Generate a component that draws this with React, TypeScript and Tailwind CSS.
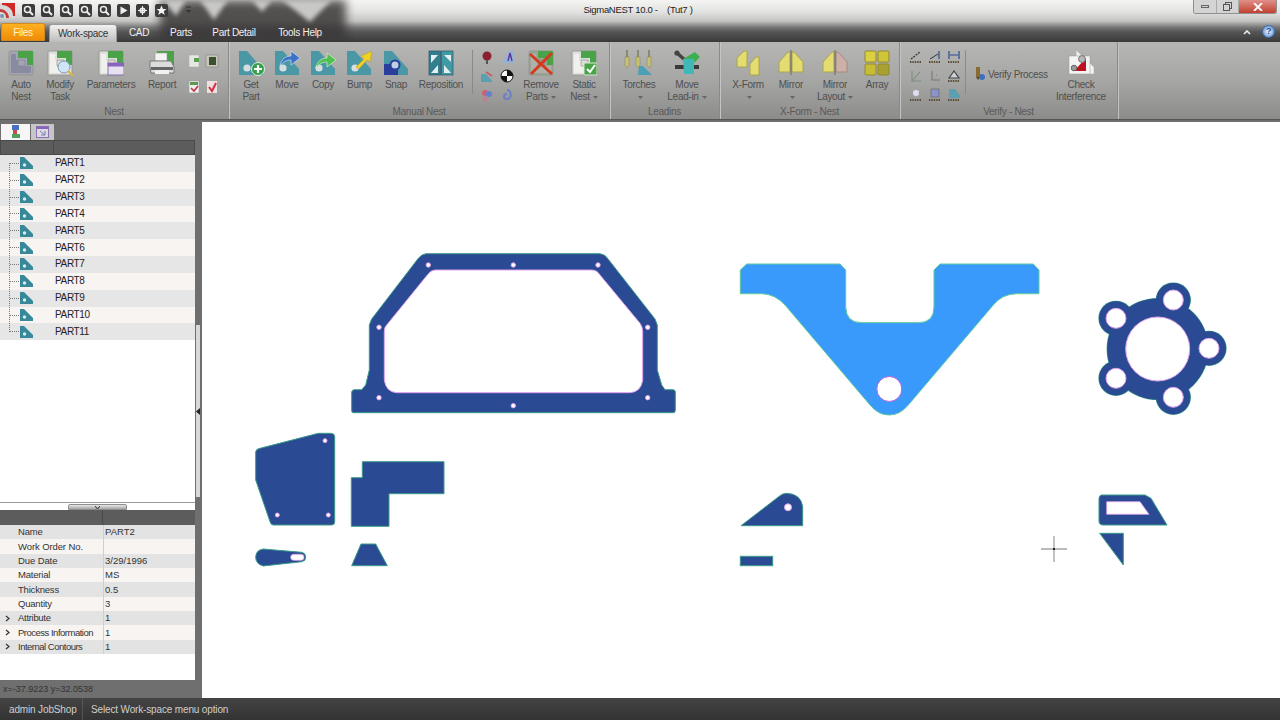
import React from "react";

const FONT = "[font-family:'Liberation_Sans',Arial,sans-serif]";

function Caret() {
  return <svg width="5" height="3" viewBox="0 0 5 3" className="inline-block ml-[3px] align-middle"><path d="M0 0H5L2.5 3Z" fill="#666" /></svg>;
}

function Nest({ kind = "auto" }: { kind?: string }) {
  const base = kind === "auto" ? "#a3a3b4" : kind === "remove" ? "#9aa594" : "#dededa";
  return (
    <svg width="26" height="26" viewBox="0 0 26 26">
      <rect x="1" y="1" width="24" height="24" rx="1.5" fill={base} stroke="#8f8f8a" strokeWidth=".8" />
      <path d="M10 1H25V15H19V8H10Z" fill="#4aa348" />
      <path d="M3 4H8V10H14V16H23V23H3Z" fill={kind === "auto" ? "#8a8aa0" : kind === "remove" ? "#b0b0a8" : "#f0f0ec"} />
      <path d="M10 10H17V16H10Z" fill={base} stroke="#85858a" strokeWidth=".6" />
      {kind === "modify" && <><circle cx="17" cy="17" r="6" fill="#cfe4f4" stroke="#7c9ab8" /><path d="M21 21L26 26" stroke="#d8b84a" strokeWidth="2.4" /></>}
      {kind === "params" && <><rect x="10" y="13" width="16" height="12" fill="#e6e0f0" stroke="#8a72b4" /><rect x="10" y="13" width="16" height="3.5" fill="#8a62c0" /></>}
      {kind === "remove" && <path d="M2 4L24 24M24 3L3 24" stroke="#d33a20" strokeWidth="3" />}
      {kind === "static" && <><rect x="13" y="13" width="13" height="12" rx="1" fill="#4aa348" stroke="#d8e8d0" /><path d="M16 19L19 22L24 15" stroke="#fff" strokeWidth="2" fill="none" /></>}
    </svg>
  );
}

function Printer() {
  return (
    <svg width="26" height="26" viewBox="0 0 26 26">
      <rect x="8" y="1" width="17" height="14" fill="#4aa348" />
      <path d="M6 3H18V11H6Z" fill="#f4f4f4" stroke="#999" strokeWidth=".6" />
      <path d="M1 11H22L25 17V23H2L1 17Z" fill="#dcdcdc" stroke="#666" strokeWidth=".8" />
      <rect x="2" y="17" width="22" height="3" fill="#666" />
      <rect x="6" y="20" width="14" height="4" fill="#f2f2f2" />
    </svg>
  );
}

function PartShape({ fill = "#4a97a6" }: { fill?: string }) {
  return (
    <>
      <path d="M1 1H9L25 19V25H1Z" fill={fill} />
      <circle cx="9" cy="18" r="3.6" fill="#d8dedf" />
    </>
  );
}

function Part({ kind }: { kind: string }) {
  return (
    <svg width="27" height="26" viewBox="0 0 27 26">
      <PartShape />
      {kind === "get" && <><circle cx="20" cy="19" r="6.5" fill="#35a04a" stroke="#e4f0e4" /><path d="M20 15V23M16 19H24" stroke="#fff" strokeWidth="2.2" /></>}
      {kind === "move" && <path d="M6 16C7 9 12 6 17 6V1L26 8L17 15V10C12 10 9 12 6 16Z" fill="#3a72c8" stroke="#cfe0f4" strokeWidth=".7" />}
      {kind === "copy" && <path d="M6 18C7 11 12 8 17 8V3L26 10L17 17V12C12 12 9 14 6 18Z" fill="#4fc04f" stroke="#d8f0d0" strokeWidth=".7" />}
      {kind === "bump" && <path d="M10 17L18 9L15 6L26 1L24 12L21 10L13 19Z" fill="#f0d020" stroke="#b09a20" strokeWidth=".5" />}
      {kind === "snap" && <><path d="M1 14H15V25H1Z" fill="#2a3f9c" /><circle cx="12" cy="15" r="4.5" fill="#c0d0e0" stroke="#2a3f9c" strokeWidth="2" /></>}
    </svg>
  );
}

function Reposition() {
  return (
    <svg width="26" height="26" viewBox="0 0 26 26">
      <rect x="1" y="1" width="11.5" height="24" fill="#2f7f8f" stroke="#34506a" strokeWidth=".7" />
      <rect x="13.5" y="1" width="11.5" height="24" fill="#3f9aa4" stroke="#34506a" strokeWidth=".7" />
      <path d="M3 5H10L3 13ZM10 15V23H3Z" fill="#e6eef0" />
      <path d="M16 5H23V12ZM16 15L23 23H16Z" fill="#e6eef0" />
    </svg>
  );
}

function Yellow({ kind }: { kind: string }) {
  const y = "#e4dc70";
  const s = "#a8a450";
  return (
    <svg width="26" height="26" viewBox="0 0 26 26">
      {kind === "xform" && <><path d="M2 17V8L9 1H12V17Z" fill={y} stroke={s} /><path d="M15 25V14L21 7H24V25Z" fill={y} stroke={s} /></>}
      {kind === "mirror" && <><path d="M1 22V12L10 2H12V22Z" fill={y} stroke={s} /><path d="M25 22V12L16 2H14V22Z" fill={y} stroke={s} /><path d="M13 0V25" stroke="#666" /></>}
      {kind === "layout" && <><path d="M1 22V12L10 2H12V22Z" fill={y} stroke={s} /><path d="M25 22V12L16 2H14V22Z" fill="#cdb0a8" stroke="#a08a80" /><path d="M13 0V25" stroke="#666" /></>}
      {kind === "array" && <>
        <rect x="1" y="1" width="11" height="11" rx="1" fill="#dcd040" stroke="#8f8a30" />
        <rect x="14" y="1" width="11" height="11" rx="1" fill="#d0c438" stroke="#8f8a30" />
        <rect x="1" y="14" width="11" height="11" rx="1" fill="#c8bc34" stroke="#8f8a30" />
        <rect x="14" y="14" width="11" height="11" rx="1" fill="#a8a030" stroke="#8f8a30" />
      </>}
    </svg>
  );
}

function Torches() {
  return (
    <svg width="30" height="26" viewBox="0 0 30 26">
      {[3, 14, 25].map((x) => <g key={x}>
        <rect x={x - 1} y={0} width="2" height="7" fill="#8a8a70" />
        <path d={`M${x - 2} 7H${x + 2}V15L${x} 18L${x - 2} 15Z`} fill="#c8c270" stroke="#85805a" strokeWidth=".5" />
      </g>)}
      <path d="M15 16H19L28 25H14Z" fill="#4aa0b4" />
    </svg>
  );
}

function LeadIn() {
  return (
    <svg width="28" height="26" viewBox="0 0 28 26">
      <path d="M2 15H26V19H2Z" fill="#3a3a3a" />
      <circle cx="4" cy="3" r="2.6" fill="#444" />
      <path d="M4 3L12 10" stroke="#444" strokeWidth="3.5" />
      <path d="M10 9L22 2L27 7L21 13Z" fill="#3cb050" />
      <path d="M10 9H21V24H11Z" fill="#40b8b8" />
    </svg>
  );
}

function CheckInt() {
  return (
    <svg width="26" height="26" viewBox="0 0 26 26">
      <path d="M8 0L26 17V24H9Z" fill="#f2f2f0" stroke="#aaa" strokeWidth=".5" />
      <rect x="1" y="6" width="21" height="18" fill="#f4f4f4" stroke="#999" strokeWidth=".5" />
      <path d="M6 21L18 8V21Z" fill="#c01020" />
      <circle cx="14" cy="9" r="3.4" fill="#b8b8b8" stroke="#777" />
      <circle cx="6" cy="18" r="2.8" fill="#999" stroke="#666" />
    </svg>
  );
}

function Big({ w, icon, l1, l2, caret1, caret2 }: { w: number; icon: React.ReactNode; l1: string; l2?: string; caret1?: boolean; caret2?: boolean }) {
  return (
    <div style={{ width: w }} className="flex flex-col items-center shrink-0">
      <div className="h-[26px] flex items-center justify-center">{icon}</div>
      <div className="mt-[3px] text-[10px] tracking-[-0.3px] leading-[12px] text-[#4f4f4f] text-center whitespace-nowrap">
        <div>{l1}</div>
        {(l2 || caret1) && <div>{l2}{(caret1 || caret2) && <Caret />}</div>}
      </div>
    </div>
  );
}

function Group({ w, label, children }: { w: number; label: string; children: React.ReactNode }) {
  return (
    <div style={{ width: w }} className="shrink-0 flex flex-col border-r border-r-[#8a8a8a] shadow-[1px_0_0_#c4c4c4] h-[77px]">
      <div className="flex h-[55px] pt-2 items-start">{children}</div>
      <div className="mt-[9px] text-[10px] tracking-[-0.3px] leading-[12px] text-[#5a5a5a] text-center whitespace-nowrap">{label}</div>
    </div>
  );
}

function Small({ c, kind = "sq" }: { c: string; kind?: string }) {
  return (
    <svg width="14" height="14" viewBox="0 0 14 14">
      {kind === "sq" && <><rect x="2" y="1" width="10" height="12" fill="#e4e8e0" stroke="#aaa" strokeWidth=".5" /><path d="M7 4H12V8H7Z" fill={c} /></>}
      {kind === "dark" && <><rect x="1" y="1" width="12" height="12" fill="#c8c8b8" stroke="#777" strokeWidth=".5" /><path d="M4 3H11V11H4Z" fill={c} /></>}
      {kind === "chk" && <><rect x="2" y="1" width="10" height="12" fill="#eee" stroke="#999" strokeWidth=".5" /><path d="M3 2H11V5H3Z" fill="#5a9a50" /><path d="M4 8L7 11L11 6" stroke="#c83040" strokeWidth="1.6" fill="none" /></>}
      {kind === "chk2" && <><rect x="2" y="1" width="10" height="12" fill="#efe0e0" /><path d="M4 7L7 11L11 3" stroke="#d03040" strokeWidth="2" fill="none" /></>}
      {kind === "burst" && <><circle cx="7" cy="6" r="4.5" fill="#8a2030" /><rect x="6" y="10" width="2" height="4" fill="#555" /></>}
      {kind === "a" && <><path d="M2 13L9 1H13V13Z" fill="#8fb4d8" /><path d="M8 11L10 3L12 11" stroke="#6030a0" strokeWidth="1.4" fill="none" /></>}
      {kind === "part" && <><path d="M1 5H6L13 13H1Z" fill="#5aa0b0" /><path d="M6 3L12 7" stroke="#c86060" strokeWidth="2" /></>}
      {kind === "target" && <><circle cx="7" cy="7" r="6" fill="#f4f4f4" stroke="#111" /><path d="M7 1A6 6 0 0 1 13 7H1A6 6 0 0 0 7 13Z" fill="#111" /></>}
      {kind === "mix" && <><circle cx="5" cy="5" r="3" fill="#d06070" /><circle cx="9" cy="6" r="3" fill="#6080d0" /><circle cx="5" cy="11" r="2.5" fill="#c08090" /></>}
      {kind === "swirl" && <><path d="M7 2C12 2 12 11 7 11C3 11 3 6 7 6" stroke="#6a80c8" strokeWidth="2" fill="none" /></>}
    </svg>
  );
}

function Verify({ kind }: { kind: number }) {
  const top = [
    <path key="0" d="M2 9L11 2" stroke="#333" strokeWidth="1.2" strokeDasharray="2 1" />,
    <g key="1"><path d="M2 9L10 4" stroke="#333" strokeWidth="1" /><path d="M11 1V9" stroke="#2a4a90" strokeWidth="1.2" /></g>,
    <path key="2" d="M2 1V9M12 1V9M3 5H11" stroke="#2a4a90" strokeWidth="1.2" />,
    <path key="3" d="M3 2V12H12M3 12L11 3" stroke="#7f8f7f" strokeWidth="1.1" fill="none" />,
    <path key="4" d="M4 2V11H12M8 6H9" stroke="#777" strokeWidth="1.1" fill="none" />,
    <path key="5" d="M2 9L7 2L12 9Z" stroke="#444" strokeWidth="1.2" fill="#c8d0d8" />,
    <circle key="6" cx="7" cy="5" r="3.4" fill="#dde" stroke="#888" strokeDasharray="1 1" />,
    <rect key="7" x="3" y="1" width="8" height="8" fill="#8a94c8" stroke="#555" strokeWidth=".5" />,
    <path key="8" d="M2 1H8L13 8V10H2Z" fill="#5aa0b0" />,
  ][kind];
  return (
    <svg width="14" height="14" viewBox="0 0 14 14">
      {top}
      {kind !== 3 && kind !== 4 && <path d="M1 12H13" stroke="#5a4a30" strokeWidth="2" strokeDasharray="1.4 1" />}
    </svg>
  );
}

function Qat({ kind }: { kind: string }) {
  return (
    <div className="w-[13px] h-[13px] rounded-[2px] bg-[#3c3c3c] flex items-center justify-center shrink-0">
      <svg width="11" height="11" viewBox="0 0 11 11">
        {kind === "z" && <><circle cx="4.5" cy="4.5" r="3" fill="none" stroke="#eee" strokeWidth="1.5" /><path d="M6.8 6.8L10 10" stroke="#eee" strokeWidth="2" /></>}
        {kind === "p" && <path d="M2.5 1.5L9.5 5.5L2.5 9.5Z" fill="#eee" />}
        {kind === "g" && <><circle cx="5.5" cy="5.5" r="3" fill="#eee" /><circle cx="5.5" cy="5.5" r="1.3" fill="#3c3c3c" /><path d="M5.5 1V10M1 5.5H10" stroke="#eee" strokeWidth="1" /></>}
        {kind === "s" && <path d="M5.5 0.5L7 4H10.5L7.7 6.3L8.8 10L5.5 7.8L2.2 10L3.3 6.3L.5 4H4Z" fill="#f4f4f4" />}
      </svg>
    </div>
  );
}

function TreeIcon() {
  return <svg width="13" height="12" viewBox="0 0 13 12"><path d="M0 0H4L13 9V12H0Z" fill="#37899a" /><circle cx="4.5" cy="8" r="1.7" fill="#dcebee" /></svg>;
}

const PARTS = ["PART1", "PART2", "PART3", "PART4", "PART5", "PART6", "PART7", "PART8", "PART9", "PART10", "PART11"];
const PROPS: [string, string, boolean, string][] = [
  ["Name", "PART2", false, "tracking-[-0.2px]"],
  ["Work Order No.", "", false, "tracking-[-0.1px]"],
  ["Due Date", "3/29/1996", false, "tracking-[-0.1px]"],
  ["Material", "MS", false, "tracking-[-0.2px]"],
  ["Thickness", "0.5", false, "tracking-[-0.2px]"],
  ["Quantity", "3", false, "tracking-[-0.2px]"],
  ["Attribute", "1", true, "tracking-[-0.3px]"],
  ["Process Information", "1", true, "tracking-[-0.5px]"],
  ["Internal Contours", "1", true, "tracking-[-0.5px]"],
];

function Header() {
  return (
    <div className="relative h-[42px] shrink-0 bg-[linear-gradient(#f4f4f2_0px,#e2e2e0_12px,#c4c4c2_21px,#7a7a7a_27px,#555_32px,#3a3a3a_42px)] overflow-hidden">
      <div className="absolute left-[160px] top-0 w-[186px] h-[42px] bg-[#3b3838] blur-[5px] opacity-85" />
      <svg className="absolute left-[160px] top-0 blur-[2px]" width="190" height="26" viewBox="0 0 190 26">
        <path d="M3 0H26L16 16ZM40 0H68L54 20ZM92 0H112L102 12ZM122 0H172L150 22Z" fill="#c8c8c6" />
      </svg>

      <div className="relative flex items-center h-[19px] pt-[1px]">
        <svg className="ml-0 mr-[7px] shrink-0" width="15" height="15" viewBox="0 0 15 15">
          <rect x="0" y="0" width="15" height="15" fill="#d8d8d8" />
          <path d="M2 0H15V13H13C13 6 8 2 2 2Z" fill="#d02828" />
          <path d="M0 6C5 6 9 10 9 15H6C6 11 4 9 0 9Z" fill="#c04040" />
          <circle cx="2" cy="13" r="2" fill="#7a93b0" />
        </svg>
        <div className="flex gap-[6px] items-center">
          {["z", "z", "z", "z", "z", "p", "g", "s"].map((k, i) => <Qat key={i} kind={k} />)}
        </div>
        <svg className="ml-[17px]" width="7" height="8" viewBox="0 0 7 8"><path d="M1 1H6" stroke="#333" /><path d="M1 4H6L3.5 7Z" fill="#333" /></svg>
      </div>

      <div className="absolute inset-x-0 top-[3px] pr-[4px] text-center text-[9.5px] tracking-[-0.3px] leading-[14px] text-[#222]">SigmaNEST 10.0 -&nbsp;&nbsp;&nbsp;&nbsp;(Tut7 )</div>

      <div className="absolute right-[3px] top-0 flex h-[14px] border border-t-0 border-[#8f8f8f] rounded-b-[3px] overflow-hidden">
        <div className="w-[23px] flex items-center justify-center bg-[#d4d4d4] border-r border-[#aaa]"><div className="w-[8px] h-[3px] border border-[#666]" /></div>
        <div className="w-[22px] flex items-center justify-center bg-[#d4d4d4] border-r border-[#aaa]">
          <svg width="9" height="9" viewBox="0 0 9 9"><rect x="2.5" y=".5" width="6" height="6" fill="none" stroke="#555" /><rect x=".5" y="2.5" width="6" height="6" fill="#d4d4d4" stroke="#555" /></svg>
        </div>
        <div className="w-[37px] flex items-center justify-center bg-[linear-gradient(#e09088,#c04030)]">
          <svg width="10" height="8" viewBox="0 0 10 8"><path d="M1 0L9 8M9 0L1 8" stroke="#f6f6f6" strokeWidth="2" /></svg>
        </div>
      </div>

      <div className="absolute left-0 bottom-0 right-0 flex items-end h-[20px] text-[10px] tracking-[-0.3px] text-[#f0f0f0]">
        <div className="ml-[1px] w-[44px] h-[18px] mb-[1px] rounded-t-[2px] bg-[linear-gradient(#ffb020,#ee8c08)] border border-[#d08a20] flex items-center justify-center text-[#fff3d0]">Files</div>
        <div className="ml-[4px] w-[68px] h-[18px] rounded-t-[3px] bg-[linear-gradient(#f2f2f2,#bcbcbc)] border border-b-0 border-[#9a9a9a] flex items-center justify-center text-[#333]">Work-space</div>
        <div className="w-[44px] text-center h-[18px] leading-[18px]">CAD</div>
        <div className="w-[40px] text-center h-[18px] leading-[18px]">Parts</div>
        <div className="w-[66px] text-center h-[18px] leading-[18px]">Part Detail</div>
        <div className="w-[66px] text-center h-[18px] leading-[18px]">Tools Help</div>
        <div className="flex-1" />
        <svg className="mb-[7px] mr-[11px]" width="8" height="5" viewBox="0 0 8 5"><path d="M1 4L4 1L7 4" stroke="#eee" strokeWidth="1.6" fill="none" /></svg>
        <div className="w-[13px] h-[13px] mb-[4px] mr-[5px] rounded-full bg-[radial-gradient(#fff,#3a78c8)] border border-[#3a70b8] flex items-center justify-center text-[9px] font-bold text-[#1e50a0] leading-none">?</div>
      </div>
    </div>
  );
}

function Ribbon() {
  return (
    <div className="h-[78px] shrink-0 flex bg-[linear-gradient(#b6b6b4,#a6a6a4_50%,#8c8c8a)] border-b border-b-[#555]">
      <Group w={229} label="Nest">
        <Big w={42} icon={<Nest kind="auto" />} l1="Auto" l2="Nest" />
        <Big w={36} icon={<Nest kind="modify" />} l1="Modify" l2="Task" />
        <Big w={66} icon={<Nest kind="params" />} l1="Parameters" />
        <Big w={36} icon={<Printer />} l1="Report" />
        <div className="ml-[7px] grid grid-cols-2 gap-x-[4px] gap-y-[12px] mt-[4px]">
          <Small c="#5aa050" /><Small c="#3a5030" kind="dark" />
          <Small c="#5aa050" kind="chk" /><Small c="#c83040" kind="chk2" />
        </div>
      </Group>
      <Group w={381} label="Manual Nest">
        <div className="w-[4px] shrink-0" />
        <Big w={36} icon={<Part kind="get" />} l1="Get" l2="Part" />
        <Big w={36} icon={<Part kind="move" />} l1="Move" />
        <Big w={36} icon={<Part kind="copy" />} l1="Copy" />
        <Big w={37} icon={<Part kind="bump" />} l1="Bump" />
        <Big w={36} icon={<Part kind="snap" />} l1="Snap" />
        <Big w={54} icon={<Reposition />} l1="Reposition" />
        <div className="w-px h-[44px] mx-[4px] bg-[#8a8a8a]" />
        <div className="grid grid-cols-2 gap-x-[5px] gap-y-[5px] w-[37px] pl-[3px]">
          <Small c="" kind="burst" /><Small c="" kind="a" />
          <Small c="" kind="part" /><Small c="" kind="target" />
          <Small c="" kind="mix" /><Small c="" kind="swirl" />
        </div>
        <Big w={54} icon={<Nest kind="remove" />} l1="Remove" l2="Parts" caret2 />
        <Big w={32} icon={<Nest kind="static" />} l1="Static" l2="Nest" caret2 />
      </Group>
      <Group w={110} label="Leadins">
        <div className="w-[8px] shrink-0" />
        <Big w={42} icon={<Torches />} l1="Torches" caret1 />
        <Big w={54} icon={<LeadIn />} l1="Move" l2="Lead-in" caret2 />
      </Group>
      <Group w={180} label="X-Form - Nest">
        <div className="w-[6px] shrink-0" />
        <Big w={44} icon={<Yellow kind="xform" />} l1="X-Form" caret1 />
        <Big w={42} icon={<Yellow kind="mirror" />} l1="Mirror" caret1 />
        <Big w={46} icon={<Yellow kind="layout" />} l1="Mirror" l2="Layout" caret2 />
        <Big w={38} icon={<Yellow kind="array" />} l1="Array" />
      </Group>
      <Group w={218} label="Verify - Nest">
        <div className="grid grid-cols-3 gap-x-[5px] gap-y-[5px] ml-[9px] w-[52px] shrink-0">
          {[0, 1, 2, 3, 4, 5, 6, 7, 8].map((k) => <Verify key={k} kind={k} />)}
        </div>
        <div className="w-px h-[44px] ml-[4px] bg-[#8a8a8a]" />
        <div className="flex items-center ml-[8px] w-[78px] h-[14px] mt-[17px] shrink-0 text-[10px] tracking-[-0.3px] text-[#4f4f4f] whitespace-nowrap">
          <svg className="mr-[3px] shrink-0" width="11" height="14" viewBox="0 0 11 14"><rect x="2" y="0" width="4" height="10" fill="#8a6a30" /><path d="M2 10H6L4 13Z" fill="#5a4a20" /><circle cx="8" cy="10" r="3" fill="#3a70c0" /></svg>
          Verify Process
        </div>
        <Big w={58} icon={<CheckInt />} l1="Check" l2="Interference" />
      </Group>
      <div className="flex-1" />
    </div>
  );
}

function LeftPanel() {
  return (
    <div className="w-[202px] shrink-0 flex bg-[#6f6f6f]">
      <div className="w-[195px] shrink-0 flex flex-col">
        <div className="h-[4px] shrink-0" />
        <div className="flex h-[16px] shrink-0 gap-[1px]">
          <div className="ml-[1px] w-[29px] bg-[#f6f6f6] flex items-center justify-center">
            <svg width="10" height="14" viewBox="0 0 10 14"><rect x="1" y="0" width="7" height="5" fill="#4a70c0" /><rect x="2" y="5" width="4" height="4" fill="#c05050" /><rect x="1" y="9" width="8" height="4" fill="#50a060" /></svg>
          </div>
          <div className="w-[23px] bg-[#c6c6c6] flex items-center justify-center">
            <svg width="13" height="12" viewBox="0 0 13 12"><rect x=".5" y=".5" width="12" height="11" fill="#dcd8e4" stroke="#8a72b4" /><rect x="1" y="1" width="11" height="2" fill="#8a62c0" /><path d="M4 5L9 9M9 5V9H5" stroke="#7a80b0" fill="none" /></svg>
          </div>
        </div>
        <div className="h-[15px] shrink-0 flex bg-[#5c5c5c] border border-[#4a4a4a]">
          <div className="w-[53px] border-r border-[#4a4a4a]" />
        </div>
        <div className="h-[347px] shrink-0 bg-white flex flex-col relative">
          {PARTS.map((p, i) => (
            <div key={p} className={`flex items-center h-[16.85px] shrink-0 ${i % 2 === 0 ? "bg-[#e6e6e6]" : "bg-[#f8f4f2]"}`}>
              <div className="w-[10px] shrink-0" />
              <div className="w-[9px] shrink-0 border-t border-dotted border-[#777]" />
              <div className="w-[36px] shrink-0 pl-[1px]"><TreeIcon /></div>
              <span className="text-[10px] text-[#222] leading-none tracking-[-0.35px]">{p}</span>
            </div>
          ))}
          <div className="absolute left-[9px] top-[8px] h-[169px] border-l border-dotted border-[#777]" />
        </div>
        <div className="h-[8px] shrink-0 bg-white relative flex justify-center items-end border-t border-[#9a9a9a]">
          <div className="w-[59px] h-[6px] rounded-t-[2px] bg-[linear-gradient(#e8e8e8,#a4a4a4)] border border-[#8f8f8f] flex items-center justify-center">
            <svg width="5" height="3" viewBox="0 0 5 3"><path d="M0 0L2.5 3L5 0" fill="none" stroke="#333" /></svg>
          </div>
        </div>
        <div className="h-[15px] shrink-0 flex bg-[#5c5c5c]">
          <div className="w-[103px] border-r border-[#4a4a4a]" />
        </div>
        <div className="h-[155px] shrink-0 bg-white flex flex-col">
          {PROPS.map(([n, v, arrow, track], i) => (
            <div key={n} className={`flex h-[14.35px] shrink-0 items-center text-[9.5px] leading-none text-[#333] ${i % 2 === 0 ? "bg-[#e3e3e3]" : "bg-[#f7f4f1]"}`}>
              <div className="w-[18px] shrink-0 pl-[5px]">
                {arrow && <svg width="5" height="7" viewBox="0 0 5 7"><path d="M1 1L4 3.5L1 6" fill="none" stroke="#333" strokeWidth="1.2" /></svg>}
              </div>
              <div className={`w-[85px] shrink-0 whitespace-nowrap ${track}`}>{n}</div>
              <div className="pl-[1px] border-l border-[#cfcfcf] h-full flex items-center">{v}</div>
            </div>
          ))}
        </div>
        <div className="flex-1 text-[9px] leading-[18px] pl-[3px] text-[#333] whitespace-nowrap">x=-37.9223 y=32.0538</div>
      </div>
      <div className="flex-1 flex flex-col relative">
        <div className="absolute left-[1px] top-[205px] w-[4px] h-[172px] bg-[#d8d8d8]" />
        <div className="absolute left-[1px] top-[285px] w-[4px] h-[12px] flex items-center">
          <svg width="4" height="7" viewBox="0 0 4 7"><path d="M4 0L0 3.5L4 7Z" fill="#222" /></svg>
        </div>
      </div>
    </div>
  );
}

const NAVY = "#2a4b93";
const EDGE = "#3a9c88";
const PINK = "#e0a0ee";

function CanvasArt() {
  const hole = (x: number, y: number, r = 2.2) => <circle key={`${x}-${y}`} cx={x} cy={y} r={r} fill="#fff" stroke={PINK} strokeWidth="1" />;
  const lobes = [[1173.3, 300], [1116, 318.3], [1209, 348.3], [1116, 378.3], [1173.3, 397.3]];
  const part = { fill: NAVY, stroke: EDGE, strokeWidth: 1 };
  return (
    <svg className="block w-full h-full" viewBox="202 122 1078 576">
      <path {...part} fillRule="evenodd" d="M351.7 392Q352 390 354 389.7H361.7L365.7 385L369.3 370V325L371.7 319L418.3 258.3Q422 254 426 253.7H600Q605 254 608.3 259.3L655 319L657.3 325V370L661.7 385L665 389.7H673.3Q675.3 390 675.3 392V410.7Q675 412.7 673.3 412.7H353.3Q351.7 412.7 351.7 410.7Z" />
      <path d="M435 270H591.7Q597 270 600 275L640 323.3Q642.7 327 642.7 331.7V380Q641 392 630 392.7H396.7Q386 392 384.3 380V331.7Q384.3 327 386.7 325L427.3 275Q431 270 435 270Z" fill="#fff" stroke={PINK} strokeWidth="1" />
      {[[428.3, 265], [513.3, 265], [598, 265], [379, 327.3], [647.7, 327.3], [379, 397.7], [647.7, 397.7], [513.3, 405.7]].map(([x, y]) => hole(x, y))}

      <path fill="#3a9afc" stroke="#5ecb9c" strokeWidth="1" d="M740.3 270L746.7 264H840L845.7 270V306.7Q846 322.7 861.7 322.7H918.3Q934 322.7 934 306.7V270L940 264H1033.3L1039 270V293.7H1016.7Q1002 294 993.3 305L908.3 405Q900 415 889.3 415Q878 415 870 405L785 305Q775 294 761.7 293.7H740.3Z" />
      <circle cx="889.3" cy="389" r="12.5" fill="#fff" stroke="#b860e4" strokeWidth="1" />

      <g>
        {lobes.map(([x, y]) => <circle key={`e${x}${y}`} cx={x} cy={y} r="17.6" fill={EDGE} />)}
        <circle cx="1157.7" cy="349" r="51.1" fill={EDGE} />
        {lobes.map(([x, y]) => <circle key={`f${x}${y}`} cx={x} cy={y} r="17" fill={NAVY} />)}
        <circle cx="1157.7" cy="349" r="50.5" fill={NAVY} />
        {lobes.map(([x, y]) => <circle key={`h${x}${y}`} cx={x} cy={y} r="10" fill="#fff" stroke={PINK} strokeWidth="1" />)}
        <circle cx="1157.7" cy="349" r="32" fill="#fff" stroke={PINK} strokeWidth="1" />
      </g>

      <path {...part} d="M255.7 451.7Q256 449 260 448.3L318.3 433.3H331Q334.7 433.5 334.7 436.7V521.7Q334.7 525 331.7 525H273.3Q271 525 270 521.7L255.7 480Z" />
      {[[325, 440.7], [277.3, 515], [328.3, 515]].map(([x, y]) => hole(x, y, 2))}
      <path {...part} d="M362.3 461.7H444V493.7H389V526.3H351.3V477.7H362.3Z" />
      <path {...part} d="M263.3 549L301.7 552.3Q305.7 553 305.7 557.3Q305.7 561 301.7 561.7L263.3 566Q255.7 564 255.7 557.3Q255.7 550 263.3 549Z" />
      <rect x="290.7" y="554.3" width="13.3" height="6" rx="3" fill="#fff" stroke={PINK} strokeWidth=".8" />
      <path {...part} d="M361 544H375.7L387.3 565.7H351.7Z" />
      <path {...part} d="M741 525.7L780 495.7Q783 493.3 786.7 493.3Q801 494 802.7 506.7V525.7Z" />
      {hole(788, 507.3, 3.5)}
      <rect x="740.3" y="556.3" width="32.4" height="9.4" {...part} />
      <path {...part} d="M1099 498.3Q1099.5 495 1101.7 495H1145L1151 498.3L1167 525H1103.3Q1099 525 1099 521Z" />
      <path d="M1106.7 501.7H1140L1149 514.3H1106.7Z" fill="#fff" stroke={PINK} strokeWidth=".8" />
      <path {...part} d="M1099.7 533.3H1123.3V565Z" />
      <path d="M1041 549H1067" stroke="#777" strokeWidth="1" />
      <path d="M1054 536V562" stroke="#999" strokeWidth="1.2" />
      <rect x="1053" y="548" width="2" height="2" fill="#222" />
    </svg>
  );
}

export default function App() {
  return (
    <div className={`w-[1280px] h-[720px] overflow-hidden flex flex-col bg-[#6f6f6f] ${FONT}`}>
      <Header />
      <Ribbon />
      <div className="flex-1 flex min-h-0">
        <LeftPanel />
        <div className="flex-1 flex flex-col min-w-0">
          <div className="h-[2px] shrink-0" />
          <div className="flex-1 bg-white min-h-0"><CanvasArt /></div>
        </div>
      </div>
      <div className="h-[22px] shrink-0 flex items-center bg-[linear-gradient(#444,#333)] text-[10px] tracking-[-0.15px] text-[#cfcfcf]">
        <div className="w-[83px] pl-[9px] border-r border-[#555] h-full flex items-center whitespace-nowrap">admin JobShop</div>
        <div className="pl-[8px] whitespace-nowrap">Select Work-space menu option</div>
      </div>
    </div>
  );
}
